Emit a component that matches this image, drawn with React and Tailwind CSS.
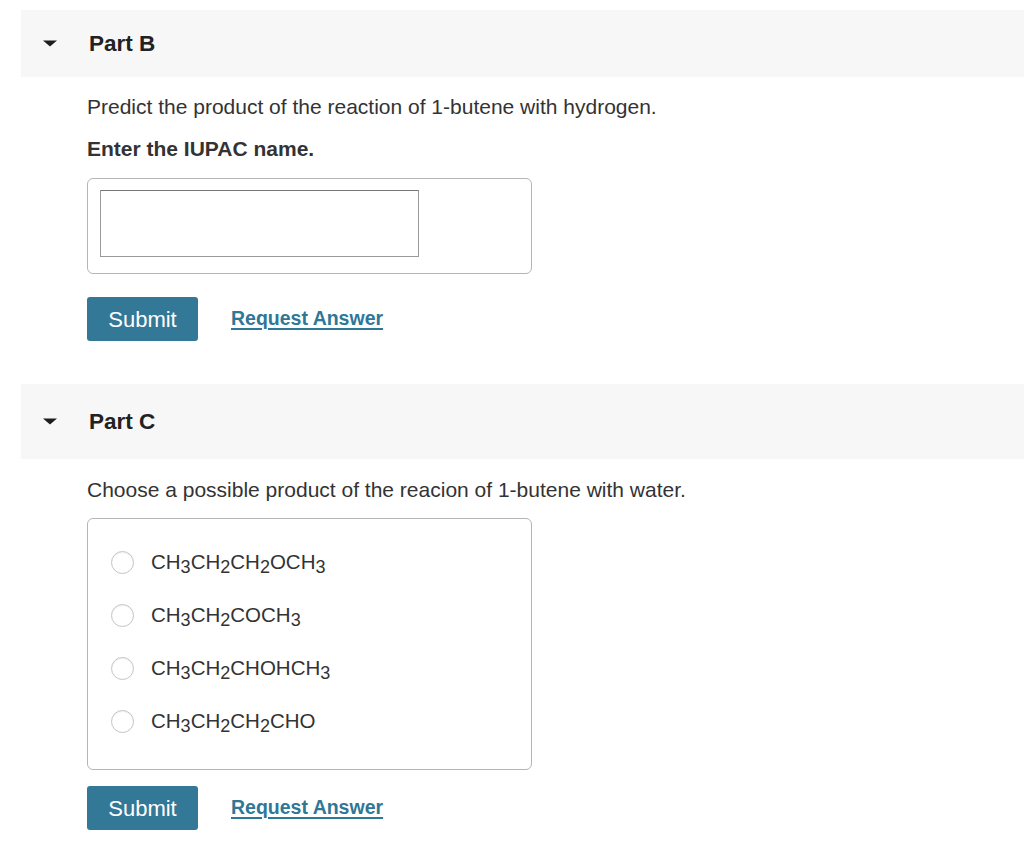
import React from 'react'

const font = { fontFamily: '"Liberation Sans", Arial, sans-serif' }

const Formula = ({ parts }) => (
  <span>
    {parts.map((p, i) =>
      typeof p === 'string' ? (
        <span key={i}>{p}</span>
      ) : (
        <sub key={i} className="text-[0.88em] relative top-[0.22em] align-baseline">{p.sub}</sub>
      )
    )}
  </span>
)

const PartHeader = ({ label, h }) => (
  <div className={`flex items-center bg-[#f7f7f7] ${h}`}>
    <svg className="ml-[21px] mr-[31px] w-[16px] h-[7px]" viewBox="0 0 16 7">
      <path d="M1 0.5 L15 0.5 L8 6.5 Z" fill="#1e1e1e" />
    </svg>
    <span className="text-[22.5px] font-bold text-[#222]">{label}</span>
  </div>
)

const Actions = () => (
  <div className="flex items-center">
    <button className="w-[111px] h-[44px] rounded-[3px] bg-[#347897] text-white text-[22px]">Submit</button>
    <a href="#" className="ml-[33px] text-[19.5px] font-bold text-[#2f7797] underline underline-offset-[3px] decoration-[1.5px]">
      Request Answer
    </a>
  </div>
)

const options = [
  ['CH', { sub: '3' }, 'CH', { sub: '2' }, 'CH', { sub: '2' }, 'OCH', { sub: '3' }],
  ['CH', { sub: '3' }, 'CH', { sub: '2' }, 'COCH', { sub: '3' }],
  ['CH', { sub: '3' }, 'CH', { sub: '2' }, 'CHOHCH', { sub: '3' }],
  ['CH', { sub: '3' }, 'CH', { sub: '2' }, 'CH', { sub: '2' }, 'CHO'],
]

export default function App() {
  return (
    <div className="min-h-screen bg-white pt-[10px] pl-[21px] text-[#333]" style={font}>
      {/* Part B */}
      <PartHeader label="Part B" h="h-[67px]" />
      <div className="pl-[66px] pt-[18px]">
        <p className="text-[21px] leading-[24px]">Predict the product of the reaction of 1-butene with hydrogen.</p>
        <p className="mt-[18px] text-[21px] leading-[24px] font-bold">Enter the IUPAC name.</p>
        <div className="mt-[17px] w-[445px] h-[96px] border border-[#b5b5b5] rounded-[6px] pt-[11px] pl-[12px]">
          <input className="w-[319px] h-[67px] border border-[#999] border-t-[#777] bg-white outline-none" />
        </div>
        <div className="mt-[23px]">
          <Actions />
        </div>
      </div>

      {/* Part C */}
      <div className="mt-[43px]">
        <PartHeader label="Part C" h="h-[75px]" />
      </div>
      <div className="pl-[66px] pt-[19px]">
        <p className="text-[21px] leading-[24px]">Choose a possible product of the reacion of 1-butene with water.</p>
        <div className="mt-[16px] w-[445px] h-[252px] border border-[#b5b5b5] rounded-[6px] pt-[17px] pl-[23px]">
          {options.map((o, i) => (
            <label key={i} className="flex items-center h-[53px]">
              <span className="w-[23px] h-[23px] rounded-full border border-[#c4c4c4] bg-white shadow-[inset_0_1px_1px_rgba(0,0,0,0.06)]" />
              <span className="ml-[17px] text-[20.5px] text-[#333]">
                <Formula parts={o} />
              </span>
            </label>
          ))}
        </div>
        <div className="mt-[16px]">
          <Actions />
        </div>
      </div>
    </div>
  )
}
